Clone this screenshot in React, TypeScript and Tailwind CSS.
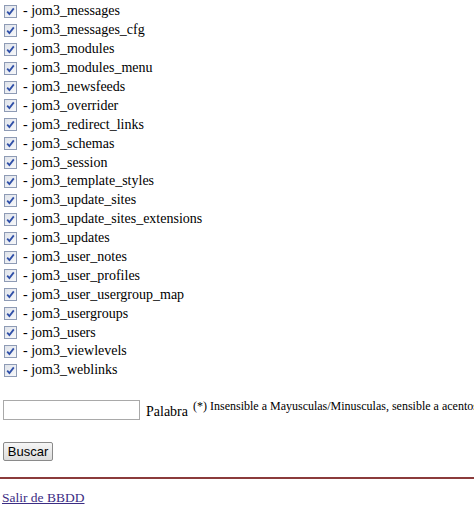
import React from "react";

const tables = [
  "jom3_messages",
  "jom3_messages_cfg",
  "jom3_modules",
  "jom3_modules_menu",
  "jom3_newsfeeds",
  "jom3_overrider",
  "jom3_redirect_links",
  "jom3_schemas",
  "jom3_session",
  "jom3_template_styles",
  "jom3_update_sites",
  "jom3_update_sites_extensions",
  "jom3_updates",
  "jom3_user_notes",
  "jom3_user_profiles",
  "jom3_user_usergroup_map",
  "jom3_usergroups",
  "jom3_users",
  "jom3_viewlevels",
  "jom3_weblinks",
];

function Check() {
  return (
    <span className="ml-[4px] mr-[6px] inline-flex h-[13px] w-[13px] shrink-0 items-center justify-center border border-[#8e9bb5] bg-gradient-to-br from-[#dfe3ea] to-[#f7f8fa]">
      <svg width="9" height="9" viewBox="0 0 9 9">
        <path d="M1.2 4.6 L3.4 7 L7.8 1.4" fill="none" stroke="#2f4fa8" strokeWidth="1.8" />
      </svg>
    </span>
  );
}

export default function App() {
  return (
    <div className="h-[506px] w-[474px] overflow-hidden bg-white text-[14px] text-black" style={{ fontFamily: '"Liberation Serif", "Times New Roman", serif' }}>
      <div className="flex flex-col pt-[2px]">
        {tables.map((t) => (
          <div key={t} className="flex h-[18.9px] items-center leading-[18px]">
            <Check />
            <span>- {t}</span>
          </div>
        ))}
      </div>
      <div className="mt-[20px] flex items-end whitespace-nowrap">
        <div className="ml-[3px] h-[20px] w-[137px] shrink-0 border border-[#a9a9a9] bg-white" />
        <span className="ml-[6px] shrink-0 leading-[17px]">Palabra</span>
        <span className="relative top-[-7px] ml-[5px] shrink-0 text-[12px] leading-[14px]">(*) Insensible a Mayusculas/Minusculas, sensible a acentos</span>
      </div>
      <div className="mt-[22px] flex">
        <button className="ml-[3px] h-[19px] w-[50px] rounded-[2px] border border-[#8a8a8a] bg-gradient-to-b from-[#f6f6f6] to-[#dcdcdc] text-[13px] leading-[15px]" style={{ fontFamily: '"Liberation Sans", Arial, sans-serif' }}>
          Buscar
        </button>
      </div>
      <div className="mt-[16px] h-[2px] w-full bg-[#8b3b3b]" />
      <div className="mt-[8px] pl-[2px]">
        <a href="#" className="text-[13.5px] text-[#3c2d84] underline leading-[18px]">Salir de BBDD</a>
      </div>
    </div>
  );
}
